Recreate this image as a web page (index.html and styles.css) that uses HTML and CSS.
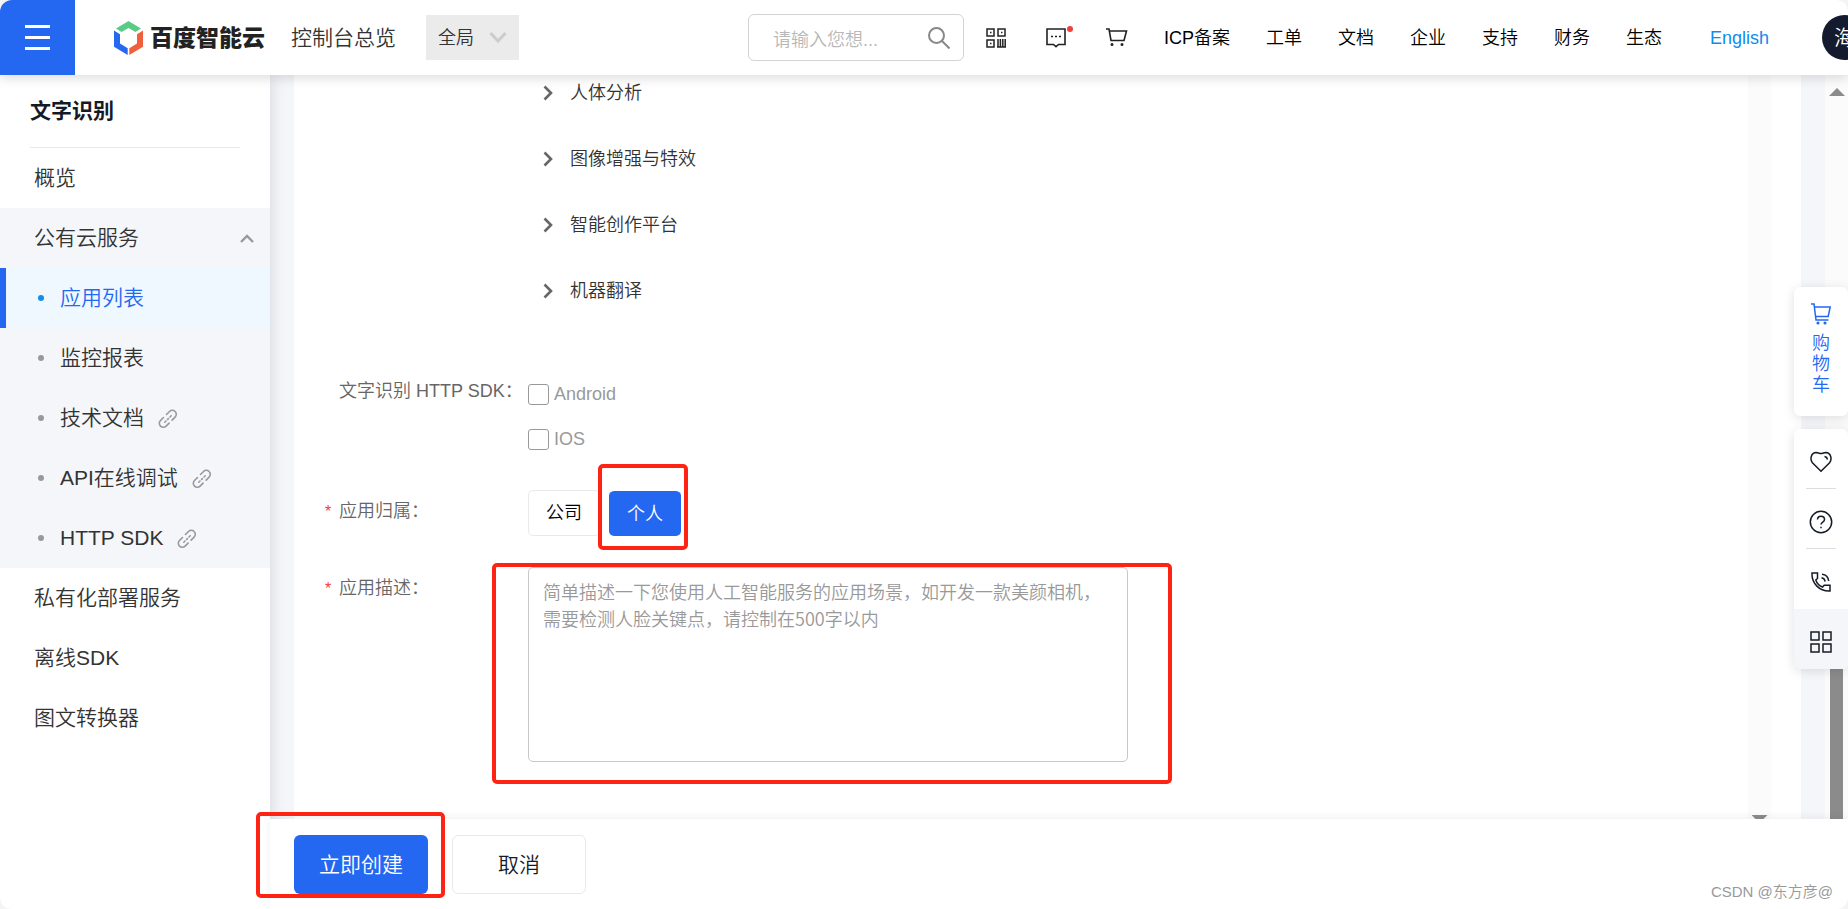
FILE: index.html
```html
<!DOCTYPE html>
<html lang="zh-CN">
<head>
  <meta charset="UTF-8" />
  <title>百度智能云 - 文字识别</title>
  <link rel="stylesheet" href="styles.css">
</head>
<body>
  <svg class="sprite" aria-hidden="true">
    <symbol id="icon-link" viewBox="0 0 20 20">
      <g fill="none" stroke="currentColor" stroke-width="1.6" stroke-linecap="round">
        <path d="M8.500 5.500l3-3a3.900 3.900 0 0 1 5.600 0 3.900 3.900 0 0 1 0 5.600l-3 3" />
        <path d="M5.500 8.500l-3 3a3.900 3.900 0 0 0 0 5.600 3.900 3.900 0 0 0 5.600 0l3-3" />
        <path d="M6.800 13.200l1.200-1.200M9.600 10.400l.8-.8M12 8l1.200-1.200" />
      </g>
    </symbol>
    <symbol id="icon-right" viewBox="0 0 12 16">
      <path d="M2.500 1.500l6.500 6.500-6.500 6.500" fill="none" stroke="#666" stroke-width="2.600" />
    </symbol>
  </svg>

  <header class="topbar">
    <button class="menu-btn" aria-label="菜单"><span></span><span></span><span></span></button>
    <a class="logo" href="#">
      <svg width="29" height="34" viewBox="0 0 29 34">
        <path d="M14.500 0L27 7.500 21.500 11 14.500 7 7.500 11 2 7.500z" fill="#5acb87" />
        <path d="M0 9.500l6 3.800v9.200l7.700 4.700V34L0 25.800z" fill="#2468f2" />
        <path d="M29 9.500l-6 3.800v9.200l-7.700 4.700V34L29 25.800z" fill="#f0603e" />
      </svg>
      <span>百度智能云</span>
    </a>
    <a class="overview" href="#">控制台总览</a>
    <button class="region">全局
      <svg width="18" height="13" viewBox="0 0 18 13"><path d="M1.500 2L9 10l7.500-8" fill="none" stroke="#ccc" stroke-width="3" /></svg>
    </button>

    <form class="search">
      <input type="text" placeholder="请输入您想..." aria-label="搜索" />
      <button type="button" aria-label="搜索">
        <svg width="22" height="22" viewBox="0 0 22 22" fill="none" stroke="#888" stroke-width="2"><circle cx="8.500" cy="8.500" r="7.500" /><path d="M14 14l7.500 7.500" /></svg>
      </button>
    </form>
    <div class="tools">
      <a href="#" aria-label="二维码">
        <svg width="20" height="20" viewBox="0 0 20 20" fill="none" stroke="#222" stroke-width="1.500">
          <path d="M1 1h7v7H1zM12 1h7v7h-7zM1 12h7v7H1zM12 11v8.500M14.400 11v8.500M16.800 11v8.500M19.200 11v8.500M11 19h9" />
          <path d="M4 4.500h1.500M15 4.500h1.500M4 15.500h1.500" />
        </svg>
      </a>
      <a class="message" href="#" aria-label="消息">
        <svg width="20" height="20" viewBox="0 0 20 20" fill="none" stroke="#222" stroke-width="1.600">
          <path d="M1 1h18v15.500h-6.500L10 18.700l-2.500-2.200H1z" /><path d="M5 8.500h2M9 8.500h2M13 8.500h2" />
        </svg>
      </a>
      <a href="#" aria-label="购物车">
        <svg width="22" height="20" viewBox="0 0 22 20" fill="none" stroke="#222" stroke-width="1.600">
          <path d="M0 1h3l2 11.500h13L20.500 3H3.500" /><circle cx="6" cy="16.500" r=".7" /><circle cx="16" cy="16.500" r=".7" />
        </svg>
      </a>
    </div>
    <nav class="top-nav">
      <a href="#">ICP备案</a>
      <a href="#">工单</a>
      <a href="#">文档</a>
      <a href="#">企业</a>
      <a href="#">支持</a>
      <a href="#">财务</a>
      <a href="#">生态</a>
    </nav>
    <a class="lang" href="#">English</a>
    <span class="avatar">海</span>
  </header>

  <div class="layout">
    <aside class="sidebar">
      <h2>文字识别</h2>
      <a class="item" href="#">概览</a>
      <div class="group">
        <a class="item" href="#">公有云服务
          <svg width="14" height="9" viewBox="0 0 14 9"><path d="M1 8l6-6 6 6" fill="none" stroke="#999" stroke-width="2.400" /></svg>
        </a>
        <a class="item sub active" href="#">应用列表</a>
        <a class="item sub" href="#">监控报表</a>
        <a class="item sub" href="#">技术文档<svg class="link-icon"><use href="#icon-link" /></svg></a>
        <a class="item sub" href="#">API在线调试<svg class="link-icon"><use href="#icon-link" /></svg></a>
        <a class="item sub" href="#">HTTP SDK<svg class="link-icon"><use href="#icon-link" /></svg></a>
      </div>
      <a class="item" href="#">私有化部署服务</a>
      <a class="item" href="#">离线SDK</a>
      <a class="item" href="#">图文转换器</a>
    </aside>

    <main class="workspace">
      <div class="scroll-area">
        <form class="panel">
          <ul class="tree">
            <li><svg class="arrow"><use href="#icon-right" /></svg>人体分析</li>
            <li><svg class="arrow"><use href="#icon-right" /></svg>图像增强与特效</li>
            <li><svg class="arrow"><use href="#icon-right" /></svg>智能创作平台</li>
            <li><svg class="arrow"><use href="#icon-right" /></svg>机器翻译</li>
          </ul>

          <div class="row sdk">
            <span class="label">文字识别 HTTP SDK：</span>
            <div class="checks">
              <label><input type="checkbox" />Android</label>
              <label><input type="checkbox" />IOS</label>
            </div>
          </div>

          <div class="row owner">
            <span class="label required">应用归属：</span>
            <div class="choices">
              <button type="button">公司</button>
              <div class="mark mark-choice"><button type="button" class="selected">个人</button></div>
            </div>
          </div>

          <div class="row desc">
            <label class="label required" for="desc">应用描述：</label>
            <div class="mark mark-desc">
              <textarea id="desc" placeholder="简单描述一下您使用人工智能服务的应用场景，如开发一款美颜相机，需要检测人脸关键点，请控制在500字以内"></textarea>
            </div>
          </div>
        </form>
        <div class="track inner"><i class="down"></i></div>
        <div class="edge"></div>
        <div class="gutter"></div>
        <div class="track outer"><i class="up"></i><i class="thumb"></i></div>
      </div>

      <footer class="actions">
        <div class="mark mark-submit"><button class="primary">立即创建</button></div>
        <button>取消</button>
        <span class="watermark">CSDN @东方彦@</span>
      </footer>
    </main>
  </div>

  <aside class="float">
    <a class="cart" href="#">
      <svg width="20" height="22" viewBox="0 0 20 22" fill="none" stroke="#2468f2" stroke-width="1.500">
        <path d="M0 1h3l2 16h12.500M3.500 4h15.700l-2 9.500H4.700" /><circle cx="7" cy="20" r=".8" /><circle cx="14" cy="20" r=".8" />
      </svg>
      <span>购物车</span>
    </a>
    <div class="float-list">
      <a href="#" aria-label="收藏">
        <svg width="22" height="22" viewBox="0 0 22 22" fill="none" stroke="#151b26" stroke-width="1.500">
          <path d="M11 20.300L2.400 11.700C-.2 8.500.8 1.900 6.200 1.600c2.200 0 3.300.9 4.800 1 1.500-.1 2.600-1 4.800-1 5.400.3 6.400 6.900 3.800 10.100z" /><path d="M14.500 5.500c1.700.2 2.700 1.200 2.800 3" />
        </svg>
      </a>
      <a href="#" aria-label="帮助">
        <svg width="24" height="24" viewBox="0 0 24 24" fill="none" stroke="#151b26" stroke-width="1.500">
          <circle cx="12" cy="12" r="10.700" /><path d="M8.500 9.600c0-4.400 7-4.400 7 0 0 2.600-3.500 2.400-3.500 5M12 16.700v1.500" />
        </svg>
      </a>
      <a href="#" aria-label="电话">
        <svg width="20" height="20" viewBox="0 0 20 20" fill="none" stroke="#151b26" stroke-width="1.500">
          <path d="M1 1h5.500v5.500L4.800 8c1 3.200 3.400 5.700 6.700 7l1.700-1.700H19V19C8.500 19.500.5 11.500 1 1z" /><path d="M10.500 5.800c2 .3 3.300 1.600 3.700 3.700M11 2.200c3.600.4 6.300 3 6.700 6.800" />
        </svg>
      </a>
      <a href="#" aria-label="更多">
        <svg width="22" height="22" viewBox="0 0 22 22" fill="none" stroke="#151b26" stroke-width="1.500">
          <path d="M1 1h8v8H1zM13 1h8v8h-8zM1 13h8v8H1zM13 13h8v8h-8z" />
        </svg>
      </a>
    </div>
  </aside>
</body>
</html>
```
FILE: styles.css
```css
:root {
  --primary: #2468f2;
  --text: #333;
  --muted: #999;
  --soft: #f5f6fa;
  --mark: #ff2314;
}

* {
  box-sizing: border-box;
}

html {
  background: #f4f4f4;
}

body {
  margin: 0;
  height: 100vh;
  display: flex;
  flex-direction: column;
  overflow: hidden;
  border-radius: 12px;
  background: #fff;
  color: var(--text);
  font-family: "Liberation Sans", "Noto Sans CJK SC", sans-serif;
  font-size: 18px;
  font-weight: 350;
  line-height: 26px;
}

a {
  color: inherit;
  text-decoration: none;
}

button, input, textarea {
  font: inherit;
  color: inherit;
}

button {
  padding: 0;
  cursor: pointer;
}

svg {
  display: block;
  flex: none;
}

.sprite {
  position: absolute;
  width: 0;
  height: 0;
}

/* top bar */
.topbar {
  position: relative;
  z-index: 2;
  flex: none;
  display: flex;
  align-items: center;
  height: 75px;
  overflow: hidden;
  background: #fff;
  box-shadow: 0 2px 12px rgba(7, 12, 20, 0.16);
}

.menu-btn {
  width: 75px;
  height: 75px;
  display: flex;
  flex-direction: column;
  align-items: center;
  justify-content: center;
  gap: 8px;
  border: 0;
  background: var(--primary);
}

.menu-btn span {
  width: 25px;
  height: 3px;
  background: #fff;
}

.logo {
  display: flex;
  align-items: center;
  gap: 7px;
  margin-left: 39px;
  color: #222;
  font-size: 23px;
  font-weight: 900;
}

.overview {
  margin-left: 26px;
  font-size: 21px;
}

.region {
  display: flex;
  align-items: center;
  justify-content: space-between;
  width: 93px;
  height: 45px;
  margin-left: 30px;
  padding: 0 12px;
  border: 0;
  background: #ebebeb;
}

.search {
  display: flex;
  align-items: center;
  width: 216px;
  height: 47px;
  margin-left: auto;
  padding: 0 13px 0 24px;
  border: 1px solid #d4d4d4;
  border-radius: 6px;
}

.search input {
  flex: 1;
  min-width: 0;
  padding: 4px 0 0;
  border: 0;
  outline: 0;
}

.search input::placeholder {
  color: #b8b8b8;
}

.search button {
  border: 0;
  background: none;
}

.tools {
  display: flex;
  align-items: center;
  gap: 40px;
  margin-left: 22px;
}

.message {
  position: relative;
}

.message::after {
  content: "";
  position: absolute;
  top: -2px;
  right: -7px;
  width: 6px;
  height: 6px;
  border-radius: 50%;
  background: #f33e3e;
}

.top-nav {
  display: flex;
  gap: 36px;
  margin-left: 36px;
  color: #000;
}

.lang {
  margin-left: 48px;
  color: #108cee;
}

.avatar {
  flex: none;
  width: 45px;
  height: 45px;
  margin: 0 -19px 0 53px;
  border-radius: 50%;
  background: #151b2e;
  color: #fff;
  font-size: 21px;
  line-height: 45px;
  text-align: center;
}

/* side menu */
.layout {
  flex: 1;
  min-height: 0;
  display: flex;
}

.sidebar {
  position: relative;
  z-index: 1;
  flex: none;
  width: 270px;
  background: #fff;
  box-shadow: 0 0 16px rgba(7, 12, 20, 0.14);
}

.sidebar h2 {
  height: 73px;
  margin: 0 30px;
  border-bottom: 1px solid #e8e9eb;
  color: #151b26;
  font-size: 21px;
  font-weight: 700;
  line-height: 72px;
}

.item {
  display: flex;
  align-items: center;
  height: 60px;
  padding: 0 16px 0 34px;
  font-size: 21px;
}

.item > svg:not(.link-icon) {
  margin-left: auto;
}

.group {
  background: var(--soft);
}

.sub {
  padding-left: 38px;
}

.sub::before {
  content: "";
  width: 6px;
  height: 6px;
  margin-right: 16px;
  border-radius: 50%;
  background: #999;
}

.sub.active {
  padding-left: 32px;
  border-left: 6px solid var(--primary);
  background: #f0f8ff;
  color: var(--primary);
}

.sub.active::before {
  background: #108cee;
}

.link-icon {
  width: 20px;
  height: 20px;
  margin: 2px 0 0 14px;
  color: #999;
}

/* form */
.workspace {
  flex: 1;
  min-width: 0;
  display: flex;
  flex-direction: column;
}

.scroll-area {
  flex: 1;
  min-height: 0;
  display: flex;
  padding-left: 24px;
  background: var(--soft);
}

.panel {
  flex: 1;
  min-width: 0;
  padding: 5px 0 0 31px;
  background: #fff;
}

.tree {
  display: flex;
  flex-direction: column;
  gap: 40px;
  margin: 0;
  padding: 0 0 0 217px;
  list-style: none;
}

.tree li {
  display: flex;
  align-items: center;
  gap: 16px;
  height: 26px;
}

.arrow {
  width: 12px;
  height: 16px;
}

.row {
  display: flex;
  align-items: flex-start;
}

.label {
  flex: none;
  width: 203px;
  padding-left: 14px;
  color: #666;
}

.sdk {
  margin-top: 74px;
}

.owner {
  margin-top: 35px;
}

.desc {
  margin-top: 31px;
}

.owner .label, .desc .label {
  margin-top: 8px;
}

.required {
  padding-left: 0;
}

.required::before {
  content: "*";
  display: inline-block;
  width: 14px;
  color: #f33e3e;
  font-size: 16px;
}

.checks {
  display: flex;
  flex-direction: column;
  gap: 13px;
}

.checks label {
  display: flex;
  align-items: center;
  gap: 5px;
  height: 32px;
  color: var(--muted);
}

.checks input {
  appearance: none;
  width: 21px;
  height: 21px;
  margin: 0;
  border: 1px solid #999;
  border-radius: 3px;
  background: #fff;
}

.choices {
  display: flex;
  gap: 9px;
}

.choices button {
  width: 72px;
  height: 46px;
  border: 1px solid #e8e9eb;
  border-radius: 5px;
  background: #fff;
  color: #000;
}

.choices .selected {
  border-color: #fff;
  border-width: 1px 0 0;
  background: var(--primary);
  background-clip: padding-box;
  color: #fff;
}

.desc textarea {
  display: block;
  width: 600px;
  height: 195px;
  padding: 10px 14px;
  border: 1px solid #c8c8c8;
  border-radius: 5px;
  outline: 0;
  resize: none;
  font-family: "Noto Sans CJK SC", sans-serif;
  line-height: 27px;
}

.desc textarea::placeholder {
  color: var(--muted);
}

/* red marker frames */
.mark {
  position: relative;
}

.mark::after {
  content: "";
  position: absolute;
  z-index: 3;
  border: 4px solid var(--mark);
  border-radius: 5px;
  pointer-events: none;
}

.mark-choice::after {
  inset: -26px -7px -14px -11px;
}

.mark-desc::after {
  inset: -4px -44px -22px -36px;
}

.mark-submit::after {
  inset: -23px -17px -4px -38px;
}

/* scroll bars */
.track {
  width: 23px;
  display: flex;
  flex-direction: column;
  align-items: center;
  background: #fbfbfb;
}

.inner {
  justify-content: flex-end;
}

.outer {
  justify-content: space-between;
}

.edge {
  width: 30px;
  background: #fff;
}

.gutter {
  width: 24px;
}

.up {
  margin-top: 13px;
  border: 8px solid transparent;
  border-top: 0;
  border-bottom-color: #8b8b8b;
}

.down {
  width: 16px;
  height: 4px;
  background: #8b8b8b;
  clip-path: polygon(0 0, 100% 0, 75% 100%, 25% 100%);
}

.thumb {
  width: 13px;
  height: 300px;
  background: #8b8b8b;
}

/* bottom bar */
.actions {
  position: relative;
  z-index: 1;
  display: flex;
  align-items: flex-start;
  gap: 24px;
  height: 90px;
  padding: 16px 15px 0 24px;
  background: #fff;
  box-shadow: 0 -2px 8px rgba(7, 12, 20, 0.06);
}

.actions button {
  display: block;
  width: 134px;
  height: 59px;
  border: 1px solid #e8e9eb;
  border-radius: 6px;
  background: #fff;
  color: #151b26;
  font-size: 21px;
}

.actions .primary {
  border: 0;
  background: var(--primary);
  color: #fff;
}

.watermark {
  align-self: flex-end;
  margin: 0 0 4px auto;
  color: #999;
  font-size: 15px;
}

/* floating shortcuts */
.float {
  position: absolute;
  z-index: 3;
  top: 287px;
  right: 0;
  width: 54px;
  display: flex;
  flex-direction: column;
  gap: 13px;
}

.cart, .float-list {
  border-radius: 6px;
  background: #fff;
  box-shadow: 0 2px 12px rgba(7, 12, 20, 0.12);
}

.cart {
  display: flex;
  flex-direction: column;
  align-items: center;
  gap: 8px;
  height: 129px;
  padding-top: 16px;
  color: var(--primary);
  line-height: 21px;
}

.cart span {
  width: 18px;
}

.float-list a {
  display: flex;
  align-items: center;
  justify-content: center;
  height: 60px;
  padding-top: 6px;
  position: relative;
}

.float-list a:nth-child(-n+2)::after {
  content: "";
  position: absolute;
  bottom: 0;
  left: 12px;
  width: 30px;
  height: 1px;
  background: #dcdde0;
}

.float-list a:last-child {
  border-radius: 0 0 6px 6px;
  background: var(--soft);
}
```
